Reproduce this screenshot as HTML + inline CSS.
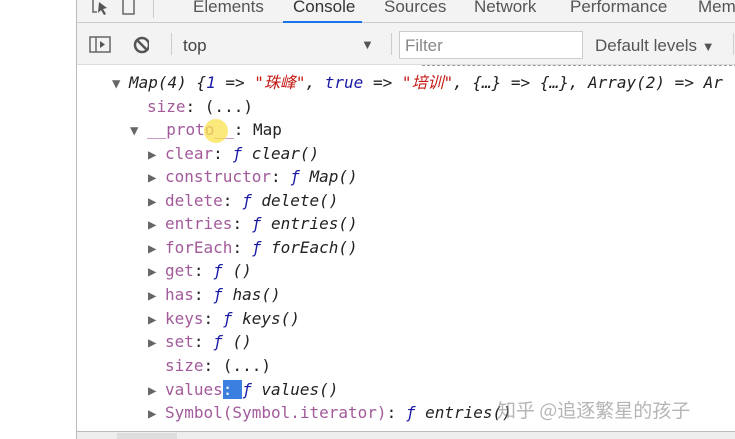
<!DOCTYPE html>
<html><head><meta charset="utf-8"><style>
*{margin:0;padding:0;box-sizing:border-box}
body{width:735px;height:439px;overflow:hidden;background:#fff;position:relative;font-family:"Liberation Sans","Noto Sans CJK SC",sans-serif}
#panel{position:absolute;left:76px;top:0;width:659px;height:439px;border-left:1px solid #bbb;background:#fff}
#tabs{position:absolute;left:0;top:0;width:100%;height:23px;background:#f3f3f3;border-bottom:1px solid #ccc}
#tabs span{position:absolute;top:-3px;font-size:17px;color:#555}
#tb{position:absolute;left:0;top:23px;width:100%;height:42px;background:#f3f3f3;border-bottom:1px solid #ddd}
#tb .t{position:absolute;font-size:17px;color:#444;top:13px}
.mono{font-family:"DejaVu Sans Mono","Liberation Mono","Noto Sans CJK SC",monospace;font-size:16px}
.row{position:absolute;white-space:pre;color:#222;height:20px;line-height:20px}
.k{color:#a25a9b}
.f{color:#1a1aa6;font-style:italic}
.i{font-style:italic}
.s{color:#c41a16}
.tri{color:#666;font-size:14px;display:inline-block;width:17px}
</style></head><body>
<div id="panel">
<div id="tabs">
<svg style="position:absolute;left:14px;top:-2px" width="50" height="20"><path d="M2 2v12h4" stroke="#666" fill="none" stroke-width="1.5"/><path d="M8 4l8 6-4 1 3 5-2 1-3-5-3 3z" fill="#555"/><rect x="32" y="1" width="11" height="15" stroke="#666" fill="none" stroke-width="1.5"/></svg>
<div style="position:absolute;left:76px;top:0;width:1px;height:18px;background:#ccc"></div>
<span style="left:116px">Elements</span>
<span style="left:216px;color:#333">Console</span>
<div style="position:absolute;left:206px;top:21px;width:79px;height:2px;background:#1a73e8"></div>
<span style="left:307px">Sources</span>
<span style="left:397px">Network</span>
<span style="left:493px">Performance</span>
<span style="left:621px">Mem</span>
</div>
<div id="tb">
<svg style="position:absolute;left:12px;top:13px" width="60" height="18"><rect x="1" y="1" width="20" height="15" stroke="#666" fill="none" stroke-width="1.5"/><line x1="7" y1="1" x2="7" y2="16" stroke="#666" stroke-width="1.5"/><path d="M11 5l5 3.5-5 3.5z" fill="#555"/><circle cx="53" cy="9" r="7" stroke="#555" fill="none" stroke-width="2.5"/><line x1="48" y1="4" x2="58" y2="14" stroke="#555" stroke-width="2.5"/></svg>
<div style="position:absolute;left:94px;top:10px;width:1px;height:22px;background:#ccc"></div>
<span class="t" style="left:106px">top</span>
<span class="t" style="left:284px;font-size:13px;top:14px;color:#555">▼</span>
<div style="position:absolute;left:314px;top:10px;width:1px;height:22px;background:#ccc"></div>
<div style="position:absolute;left:322px;top:8px;width:184px;height:28px;border:1px solid #ccc;background:#fff"></div>
<span class="t" style="left:328px;color:#888">Filter</span>
<span class="t" style="left:518px;color:#555">Default levels <span style="font-size:13px">▼</span></span>
<div style="position:absolute;left:656px;top:10px;width:1px;height:22px;background:#ccc"></div>
</div>
<div style="position:absolute;left:345px;top:63px;width:320px;height:3px;border-bottom:1px dashed #999"></div>
<div class="mono">
<div class="row" style="left:35px;top:73px"><span class="tri">▼</span><span class="i">Map(4) {<span style="color:#1a1aa6">1</span> =&gt; <span class="s">"珠峰"</span>, <span style="color:#1a1aa6">true</span> =&gt; <span class="s">"培训"</span>, {…} =&gt; {…}, Array(2) =&gt; Ar</span></div>
<div class="row" style="left:70px;top:97px"><span class="k">size</span>: (...)</div>
<div class="row" style="left:53px;top:120px"><span class="tri">▼</span><span class="k">__proto__</span>: Map</div>
<div class="row" style="left:71px;top:144px"><span class="tri">▶</span><span class="k">clear</span>: <span class="f">ƒ</span> <span class="i">clear()</span></div>
<div class="row" style="left:71px;top:167px"><span class="tri">▶</span><span class="k">constructor</span>: <span class="f">ƒ</span> <span class="i">Map()</span></div>
<div class="row" style="left:71px;top:191px"><span class="tri">▶</span><span class="k">delete</span>: <span class="f">ƒ</span> <span class="i">delete()</span></div>
<div class="row" style="left:71px;top:214px"><span class="tri">▶</span><span class="k">entries</span>: <span class="f">ƒ</span> <span class="i">entries()</span></div>
<div class="row" style="left:71px;top:238px"><span class="tri">▶</span><span class="k">forEach</span>: <span class="f">ƒ</span> <span class="i">forEach()</span></div>
<div class="row" style="left:71px;top:261px"><span class="tri">▶</span><span class="k">get</span>: <span class="f">ƒ</span> <span class="i">()</span></div>
<div class="row" style="left:71px;top:285px"><span class="tri">▶</span><span class="k">has</span>: <span class="f">ƒ</span> <span class="i">has()</span></div>
<div class="row" style="left:71px;top:309px"><span class="tri">▶</span><span class="k">keys</span>: <span class="f">ƒ</span> <span class="i">keys()</span></div>
<div class="row" style="left:71px;top:332px"><span class="tri">▶</span><span class="k">set</span>: <span class="f">ƒ</span> <span class="i">()</span></div>
<div class="row" style="left:88px;top:356px"><span class="k">size</span>: (...)</div>
<div class="row" style="left:71px;top:380px"><span class="tri">▶</span><span class="k">values</span><span style="background:#3b7fe0;color:#fff">:</span><span style="background:#3b7fe0"> </span><span class="f">ƒ</span> <span class="i">values()</span></div>
<div class="row" style="left:71px;top:403px"><span class="tri">▶</span><span class="k">Symbol(Symbol.iterator)</span>: <span class="f">ƒ</span> <span class="i">entries()</span></div>
</div>
<div style="position:absolute;left:0;top:431px;width:100%;height:8px;background:#eee;border-top:1px solid #bbb"></div>
<div style="position:absolute;left:40px;top:433px;width:60px;height:6px;background:#ddd"></div>
</div>
<div style="position:absolute;left:204px;top:119px;width:24px;height:24px;border-radius:50%;background:rgba(250,225,80,0.75)"></div>
<div style="position:absolute;left:497px;top:396px;font-size:19px;color:rgba(150,150,150,0.7);font-family:'Noto Sans CJK SC',sans-serif">知乎 @追逐繁星的孩子</div>
</body></html>
